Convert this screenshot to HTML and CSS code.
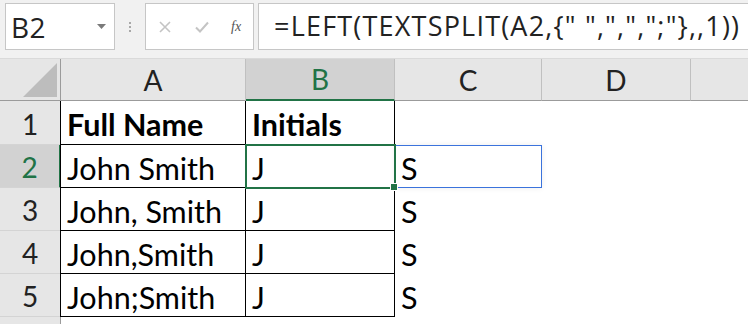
FILE: index.html
```html
<!DOCTYPE html>
<html>
<head>
<meta charset="utf-8">
<link rel="stylesheet" href="styles.css">
</head>
<body>
<div class="toolbar">
  <div class="namebox">
    <span class="name">B2</span>
    <svg class="drop" width="9" height="5" viewBox="0 0 9 5"><path d="M0 0H9L4.5 5Z" fill="#7a7a7a"/></svg>
  </div>
  <div class="dots"><i></i><i></i><i></i></div>
  <div class="fbox">
    <svg class="ico" width="12" height="12" viewBox="0 0 12 12"><path d="M1 1L11 11M11 1L1 11" stroke="#c4c4c4" stroke-width="1.6"/></svg>
    <svg class="ico" width="14" height="12" viewBox="0 0 14 12"><path d="M1 6.5L5 10.5L13 1.5" stroke="#c4c4c4" stroke-width="2" fill="none"/></svg>
    <span class="fx">fx</span>
  </div>
  <div class="formula">=LEFT(TEXTSPLIT(A2,{" ",",",";"},,1))</div>
</div>
<div class="grid">
  <div class="corner"><span class="tri"></span></div>
  <div class="ch">A</div>
  <div class="ch sel">B</div>
  <div class="ch">C</div>
  <div class="ch">D</div>
  <div class="ch last"></div>

  <div class="rh">1</div>
  <div class="c b bl bold">Full Name</div>
  <div class="c b bold">Initials</div>
  <div class="c"></div><div class="c"></div><div class="c"></div>

  <div class="rh rsel">2</div>
  <div class="c b bl">John Smith</div>
  <div class="c b active">J</div>
  <div class="c spill">S</div><div class="c"></div><div class="c"></div>

  <div class="rh">3</div>
  <div class="c b bl">John, Smith</div>
  <div class="c b">J</div>
  <div class="c">S</div><div class="c"></div><div class="c"></div>

  <div class="rh">4</div>
  <div class="c b bl">John,Smith</div>
  <div class="c b">J</div>
  <div class="c">S</div><div class="c"></div><div class="c"></div>

  <div class="rh">5</div>
  <div class="c b bl">John;Smith</div>
  <div class="c b">J</div>
  <div class="c">S</div><div class="c"></div><div class="c"></div>

  <div class="rh"></div>
  <div class="c"></div><div class="c"></div><div class="c"></div><div class="c"></div><div class="c"></div>
</div>
</body>
</html>
```
FILE: styles.css
```css
* { box-sizing: border-box; }
html, body { margin: 0; padding: 0; }
body {
  width: 748px;
  height: 324px;
  overflow: hidden;
  background: #fff;
  font-family: "Open Sans", sans-serif;
}
.toolbar {
  height: 59px;
  background: #f1f1f1;
  display: flex;
  align-items: flex-start;
  padding: 3px 0 0 5px;
  border-bottom: 1px solid #dadada;
}
.namebox {
  width: 110px;
  height: 47px;
  background: #fff;
  border: 1px solid #c6c6c6;
  display: flex;
  align-items: center;
  padding-left: 5px;
  position: relative;
}
.name {
  font-size: 28px;
  color: #222;
  letter-spacing: 0.5px;
}
.drop { position: absolute; right: 8px; top: 20px; }
.dots {
  width: 30px;
  height: 47px;
  display: flex;
  flex-direction: column;
  align-items: center;
  justify-content: center;
  gap: 2px;
}
.dots i {
  display: block;
  width: 2px;
  height: 2px;
  background: #a8a8a8;
}
.fbox {
  width: 109px;
  height: 47px;
  background: #fff;
  border: 1px solid #c6c6c6;
  display: flex;
  align-items: center;
  padding-left: 13px;
  gap: 24px;
}
.fx {
  font-family: "Liberation Serif", serif;
  font-style: italic;
  font-size: 14px;
  color: #555;
  margin-left: -2px;
}
.formula {
  flex: 1;
  margin-left: 4px;
  height: 47px;
  background: #fff;
  border: 1px solid #c6c6c6;
  border-right: none;
  font-size: 27px;
  letter-spacing: 1.2px;
  color: #222;
  padding-left: 15px;
  line-height: 44px;
  white-space: nowrap;
}
.grid {
  display: grid;
  grid-template-columns: 61px 185px 149px 147px 149px 57px;
  grid-template-rows: 42px 44px 43px 43px 43px 43px 20px;
  font-family: "Lato", sans-serif;
  font-size: 30.5px;
  color: #000;
}
.corner {
  background: #e6e6e6;
  border-right: 1px solid #9b9b9b;
  border-bottom: 1px solid #9b9b9b;
  position: relative;
}
.tri {
  position: absolute;
  right: 3px;
  bottom: 3px;
  width: 34px;
  height: 34px;
  background: #bdbdbd;
  clip-path: polygon(100% 0, 100% 100%, 0 100%);
}
.ch {
  background: #e6e6e6;
  border-right: 1px solid #c0c0c0;
  border-bottom: 1px solid #9b9b9b;
  display: flex;
  align-items: center;
  justify-content: center;
  font-size: 28px;
  color: #222;
}
.ch.last { border-right: none; }
.ch.sel {
  background: #d2d2d2;
  color: #217346;
  border-bottom: 2px solid #217346;
}
.rh {
  background: #e6e6e6;
  border-right: 1px solid #9b9b9b;
  border-bottom: 1px solid #d4d4d4;
  display: flex;
  align-items: center;
  justify-content: center;
  font-size: 28px;
  color: #222;
  padding-top: 2px;
}
.rh.rsel {
  background: #d2d2d2;
  color: #217346;
  border-right: 2px solid #217346;
}
.c {
  display: flex;
  align-items: center;
  padding: 3px 0 0 6px;
  white-space: nowrap;
  position: relative;
}
.c.b {
  border-right: 1px solid #000;
  border-bottom: 1px solid #000;
}
.c.bl { border-left: 1px solid #000; margin-left: -1px; }
.bold { font-weight: 700; }
.active {
  outline: 2px solid #217346;
  outline-offset: -1px;
  z-index: 2;
}
.active::after {
  content: "";
  position: absolute;
  right: -4px;
  bottom: -4px;
  width: 6px;
  height: 6px;
  background: #217346;
  border: 1px solid #fff;
}
.spill {
  box-shadow: inset 0 0 0 1px #3b73dc, 0 0 6px rgba(0, 0, 0, 0.08);
  z-index: 1;
}
```
